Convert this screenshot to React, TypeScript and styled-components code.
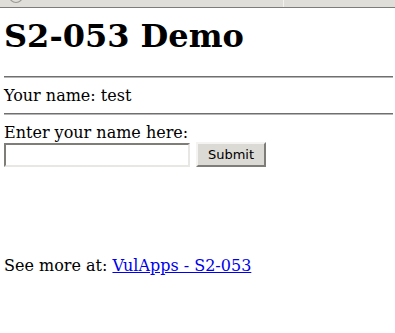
import React from "react";
import styled, { createGlobalStyle } from "styled-components";

const Global = createGlobalStyle`
  html, body { margin: 0; padding: 0; background: #ffffff; }
  body { font-family: "DejaVu Serif", "Liberation Serif", serif; font-size: 16px; color: #000; }
`;

const TopBar = styled.div`
  position: relative;
  height: 7px;
  background: #e0ded9;
  border-bottom: 1px solid #7c7c7a;
  overflow: hidden;
`;

const BarIcon = styled.svg`
  position: absolute;
  left: 8px;
  top: -12px;
`;

const BarDivider = styled.span`
  position: absolute;
  left: 283px;
  top: 0;
  width: 1px;
  height: 7px;
  background: #f2f1ee;
`;

const Page = styled.div`
  padding: 0 2px 0 4px;
`;

const Title = styled.h1`
  font-family: "DejaVu Serif", serif;
  font-size: 32px;
  font-weight: bold;
  margin: 8.5px 0 21.44px;
`;

const Rule = styled.hr`
  height: 0;
  margin: 8px 0;
  border: none;
  border-top: 1px solid #6f6f6f;
  border-bottom: 1px solid #b5b5b5;
`;

const Form = styled.form`
  margin: 0;
`;

const NameInput = styled.input`
  box-sizing: border-box;
  width: 186px;
  height: 24px;
  margin: 1px 0 0 0;
  padding: 1px 2px;
  border-style: solid;
  border-width: 2px;
  border-color: #7f7d78 #e8e7e4 #e8e7e4 #7f7d78;
  background: #fff;
  font-family: "DejaVu Sans", sans-serif;
  font-size: 13px;
  vertical-align: bottom;
`;

const SubmitButton = styled.button`
  box-sizing: border-box;
  height: 25px;
  width: 70px;
  margin: 0 0 0 6px;
  padding: 0;
  border-style: solid;
  border-width: 2px;
  border-color: #f4f3f1 #7f7d78 #7f7d78 #f4f3f1;
  background: #dcdad5;
  color: #000;
  font-family: "DejaVu Sans", sans-serif;
  font-size: 13px;
  vertical-align: bottom;
`;

const Footer = styled.p`
  margin: 89px 0 0 0;
`;

const Link = styled.a`
  color: #0000ee;
  text-decoration: underline;
`;

export default function App() {
  return (
    <>
      <Global />
      <TopBar>
        <BarIcon width="16" height="16" viewBox="0 0 16 16">
          <circle cx="8" cy="8" r="6.5" fill="none" stroke="#9a9893" strokeWidth="1.2" />
        </BarIcon>
        <BarDivider />
      </TopBar>
      <Page>
        <Title>S2-053 Demo</Title>
        <Rule />
        Your name: test
        <Rule />
        <Form onSubmit={(e) => e.preventDefault()}>
          Enter your name here:
          <br />
          <NameInput type="text" name="name" />
          <SubmitButton type="submit">Submit</SubmitButton>
        </Form>
        <Footer>
          See more at: <Link href="#">VulApps - S2-053</Link>
        </Footer>
      </Page>
    </>
  );
}
